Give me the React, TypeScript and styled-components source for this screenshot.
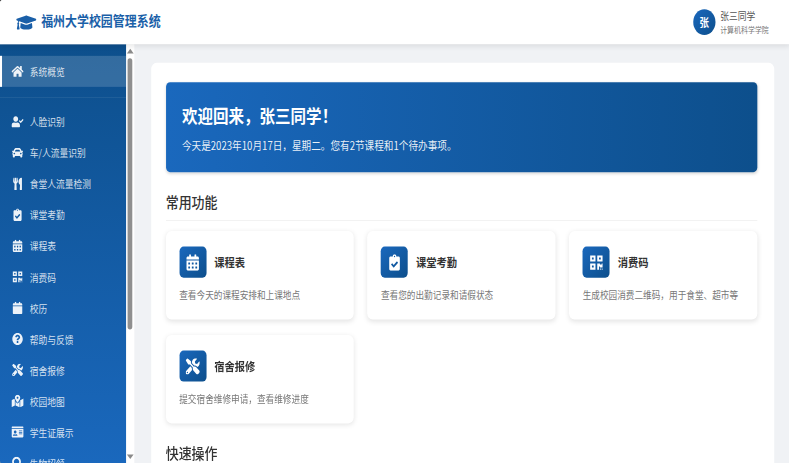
import React from "react";
import styled, { createGlobalStyle } from "styled-components";
import { IconType } from "react-icons";
import {
  FaCalendar,
  FaCalendarAlt,
  FaCar,
  FaClipboardCheck,
  FaGraduationCap,
  FaHome,
  FaIdCard,
  FaMapMarkedAlt,
  FaQrcode,
  FaQuestionCircle,
  FaSearch,
  FaTools,
  FaUserCheck,
  FaUtensils,
} from "react-icons/fa";

const GlobalStyle = createGlobalStyle`
  html, body, #root {
    height: 100%;
    margin: 0;
  }
  body {
    overflow: hidden;
    font-family: "Noto Sans CJK SC", "Noto Sans", sans-serif;
    background: #222;
  }
`;

// the shot is a 1169x597 page squeezed into the 789x463 window
const Page = styled.div`
  display: flex;
  flex-direction: column;
  width: 1170px;
  height: 598px;
  overflow: hidden;
  border-radius: 4px 0 0 4px;
  background: #f0f2f5;
  transform: scale(0.675, 0.7755);
  transform-origin: 0 0;
`;

const Header = styled.header`
  display: flex;
  flex-shrink: 0;
  align-items: center;
  justify-content: space-between;
  height: 57px;
  padding: 0 31px 0 24px;
  background: #fff;
  box-shadow: 0 2px 8px rgba(0, 0, 0, 0.1);
  position: relative;
  z-index: 2;
  box-sizing: border-box;
`;

const Brand = styled.div`
  display: flex;
  align-items: center;
  gap: 7px;
  color: #1a5fa8;

  svg {
    width: 30px;
    height: 24px;
  }
`;

const BrandName = styled.span`
  margin-bottom: 5px;
  font-size: 17.7px;
  font-weight: 700;
`;

const User = styled.div`
  display: flex;
  align-items: center;
  gap: 7px;
`;

const Avatar = styled.div`
  display: flex;
  align-items: center;
  justify-content: center;
  width: 33px;
  height: 33px;
  border-radius: 50%;
  background: linear-gradient(135deg, #1a68bd, #0d4f8c);
  color: #fff;
  font-size: 14px;
  font-weight: 700;
`;

const UserText = styled.div`
  display: flex;
  flex-direction: column;
  gap: 3px;
  padding-top: 1px;
`;

const UserName = styled.div`
  color: #555;
  font-size: 13px;
  line-height: 16px;
`;

const UserDept = styled.div`
  color: #777;
  font-size: 10.3px;
  line-height: 14px;
`;

const Body = styled.div`
  display: flex;
  flex: 1;
  min-height: 0;
`;

const Sidebar = styled.nav`
  display: flex;
  flex-shrink: 0;
  width: 198.5px;
`;

const SideList = styled.ul`
  flex: 1;
  margin: 0;
  padding: 15px 0 0;
  overflow: hidden;
  list-style: none;
  background: linear-gradient(180deg, #0d4f8c, #1a68bd);
`;

const SideItem = styled.li<{ $active?: boolean }>`
  display: flex;
  align-items: center;
  gap: 9px;
  height: 40px;
  padding-left: ${(p) => (p.$active ? "14px" : "17px")};
  border-left: ${(p) => (p.$active ? "3px solid #fff" : "none")};
  background: ${(p) => (p.$active ? "rgba(255, 255, 255, 0.16)" : "none")};
  color: rgba(255, 255, 255, 0.82);
  font-size: 13px;

  svg {
    flex-shrink: 0;
    width: 18px;
    height: 16px;
    color: rgba(255, 255, 255, 0.92);
  }
`;

const SideDivider = styled.li`
  height: 1px;
  margin: 13px 0 11px;
  background: rgba(255, 255, 255, 0.1);
`;

const ScrollRail = styled.div`
  display: flex;
  flex-direction: column;
  align-items: center;
  width: 12px;
  background: #fff;
`;

const ScrollArrow = styled.span<{ $down?: boolean }>`
  flex-shrink: 0;
  margin: ${(p) => (p.$down ? "auto 0 6px" : "6px 0 0")};
  border-left: 5px solid transparent;
  border-right: 5px solid transparent;
  border-bottom: ${(p) => (p.$down ? "none" : "6px solid #8a8a8a")};
  border-top: ${(p) => (p.$down ? "6px solid #8a8a8a" : "none")};
`;

const ScrollThumb = styled.span`
  flex-shrink: 0;
  width: 7px;
  height: 350px;
  margin-top: 6px;
  border-radius: 4px;
  background: #8f8f8f;
`;

const Main = styled.main`
  flex: 1;
  min-width: 0;
  padding: 24px 23px 0 25px;
  overflow: hidden;
`;

const Panel = styled.div`
  height: 100%;
  padding: 25px 25px 0 22px;
  border-radius: 8px 8px 0 0;
  background: #fff;
`;

const Banner = styled.section`
  display: flex;
  flex-direction: column;
  justify-content: center;
  gap: 14px;
  height: 116px;
  padding: 1px 24px 0;
  border-radius: 6px;
  background: linear-gradient(90deg, #1a68bd, #0d4f8c);
  box-shadow: 0 2px 4px rgba(0, 0, 0, 0.15);
  color: #fff;
  box-sizing: border-box;
`;

const BannerTitle = styled.h1`
  margin: 0;
  font-size: 23px;
  font-weight: 700;
  line-height: 30px;
`;

const BannerText = styled.p`
  margin: 0;
  color: rgba(255, 255, 255, 0.92);
  font-size: 14.25px;
  line-height: 20px;
`;

const SectionTitle = styled.h2`
  margin: 25px 0 13px;
  padding-bottom: 11px;
  border-bottom: 1px solid #eee;
  color: #333;
  font-size: 19.2px;
  font-weight: 500;
  line-height: 26px;
`;

const CardGrid = styled.div`
  display: grid;
  grid-template-columns: repeat(3, 1fr);
  gap: 20px;
`;

const Card = styled.article`
  height: 114px;
  padding: 20px;
  border-radius: 8px;
  background: #fff;
  box-shadow: 0 2px 8px rgba(0, 0, 0, 0.1);
  box-sizing: border-box;
`;

const CardHead = styled.div`
  display: flex;
  align-items: center;
  gap: 12px;
  margin-bottom: 15px;
`;

const CardIcon = styled.div`
  display: flex;
  align-items: center;
  justify-content: center;
  width: 40px;
  height: 40px;
  border-radius: 6px;
  background: linear-gradient(135deg, #1a68bd, #0d4f8c);
  color: #fff;

  svg {
    width: 21px;
    height: 21px;
  }
`;

const CardTitle = styled.h3`
  margin: 0 0 2px;
  color: #333;
  font-size: 15.2px;
  font-weight: 700;
`;

const CardText = styled.p`
  margin: 0;
  color: #777;
  font-size: 12.8px;
  line-height: 16px;
`;

const sideItems: { icon: IconType; label: string }[] = [
  { icon: FaUserCheck, label: "人脸识别" },
  { icon: FaCar, label: "车/人流量识别" },
  { icon: FaUtensils, label: "食堂人流量检测" },
  { icon: FaClipboardCheck, label: "课堂考勤" },
  { icon: FaCalendarAlt, label: "课程表" },
  { icon: FaQrcode, label: "消费码" },
  { icon: FaCalendar, label: "校历" },
  { icon: FaQuestionCircle, label: "帮助与反馈" },
  { icon: FaTools, label: "宿舍报修" },
  { icon: FaMapMarkedAlt, label: "校园地图" },
  { icon: FaIdCard, label: "学生证展示" },
  { icon: FaSearch, label: "失物招领" },
];

const cards: { icon: IconType; title: string; text: string }[] = [
  { icon: FaCalendarAlt, title: "课程表", text: "查看今天的课程安排和上课地点" },
  { icon: FaClipboardCheck, title: "课堂考勤", text: "查看您的出勤记录和请假状态" },
  { icon: FaQrcode, title: "消费码", text: "生成校园消费二维码，用于食堂、超市等" },
  { icon: FaTools, title: "宿舍报修", text: "提交宿舍维修申请，查看维修进度" },
];

export default function App() {
  return (
    <Page>
      <GlobalStyle />
      <Header>
        <Brand>
          <FaGraduationCap />
          <BrandName>福州大学校园管理系统</BrandName>
        </Brand>
        <User>
          <Avatar>张</Avatar>
          <UserText>
            <UserName>张三同学</UserName>
            <UserDept>计算机科学学院</UserDept>
          </UserText>
        </User>
      </Header>
      <Body>
        <Sidebar>
          <SideList>
            <SideItem $active>
              <FaHome />
              系统概览
            </SideItem>
            <SideDivider />
            {sideItems.map(({ icon: Icon, label }) => (
              <SideItem key={label}>
                <Icon />
                {label}
              </SideItem>
            ))}
          </SideList>
          <ScrollRail>
            <ScrollArrow />
            <ScrollThumb />
            <ScrollArrow $down />
          </ScrollRail>
        </Sidebar>
        <Main>
          <Panel>
            <Banner>
              <BannerTitle>欢迎回来，张三同学！</BannerTitle>
              <BannerText>今天是2023年10月17日，星期二。您有2节课程和1个待办事项。</BannerText>
            </Banner>
            <SectionTitle>常用功能</SectionTitle>
            <CardGrid>
              {cards.map(({ icon: Icon, title, text }) => (
                <Card key={title}>
                  <CardHead>
                    <CardIcon>
                      <Icon />
                    </CardIcon>
                    <CardTitle>{title}</CardTitle>
                  </CardHead>
                  <CardText>{text}</CardText>
                </Card>
              ))}
            </CardGrid>
            <SectionTitle>快速操作</SectionTitle>
          </Panel>
        </Main>
      </Body>
    </Page>
  );
}
